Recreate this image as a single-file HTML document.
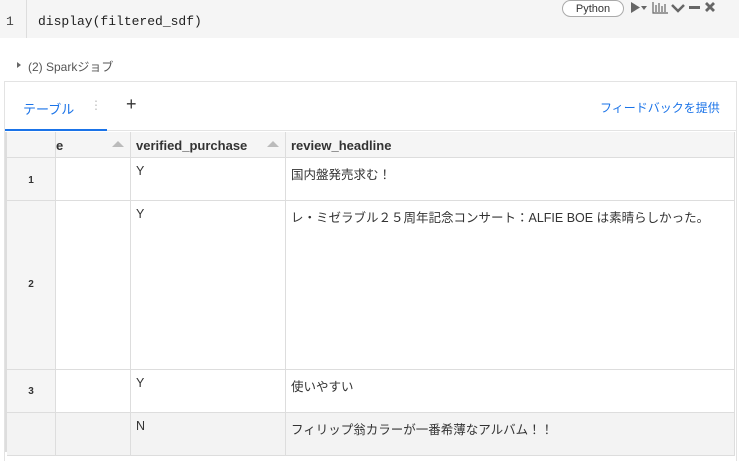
<!DOCTYPE html>
<html><head><meta charset="utf-8"><style>
*{margin:0;padding:0;box-sizing:border-box}
body{width:739px;height:452px;overflow:hidden;background:#fff;font-family:"Liberation Sans","Noto Sans CJK JP",sans-serif;position:relative}
.code{position:absolute;left:0;top:0;width:739px;height:38px;background:#f5f5f5}
.mono{font-family:"Liberation Mono","DejaVu Sans Mono",monospace;font-size:13px;color:#222;position:absolute}
.abs{position:absolute}
.panel{position:absolute;left:4px;top:81px;width:733px;height:380px;border:1px solid #e3e3e3;border-bottom:none}
.cell{position:absolute;border-right:1px solid #ddd;border-bottom:1px solid #ddd;font-size:12.5px;color:#333}
.h{font-size:13px}
</style></head><body>
<div class="code">
<div class="mono" style="left:6px;top:14px;color:#444">1</div>
<div class="abs" style="left:26px;top:0;width:1px;height:38px;background:#ddd"></div>
<div class="mono" style="left:38px;top:14px">display(filtered_sdf)</div>
<div class="abs" style="left:562px;top:0;width:62px;height:17px;border:1px solid #aaa;border-radius:9px;background:#fff;font-size:11px;color:#333;text-align:center;line-height:16px">Python</div>
<svg class="abs" style="left:628px;top:1" width="110" height="14">
<path d="M3 1 L12 6.5 L3 12Z" fill="#666"/><path d="M13 5 L19 5 L16 9Z" fill="#666"/>
<path d="M25 1 V12 H40 M28 4 V11 M31 2 V11 M34 5 V11 M37 3 V11" stroke="#666" stroke-width="1.2" fill="none"/>
<path d="M44 4 L50 10 L56 4" stroke="#666" stroke-width="2.5" fill="none"/>
<rect x="61" y="5" width="11" height="3" fill="#666"/>
<path d="M78 2 L86 10 M86 2 L78 10" stroke="#666" stroke-width="2.8"/>
</svg>
</div>
<div class="abs" style="left:17px;top:62px;width:0;height:0;border-left:4px solid #666;border-top:3.5px solid transparent;border-bottom:3.5px solid transparent"></div>
<div class="abs" style="left:28px;top:58px;font-size:12px;color:#555">(2) Sparkジョブ</div>
<div class="panel"></div>
<div class="abs" style="left:23px;top:99px;font-size:13px;color:#1a73e8">テーブル</div>
<div class="abs" style="left:90px;top:98px;font-size:12px;color:#bbb">⋮</div>
<div class="abs" style="left:126px;top:94px;font-size:18px;color:#333;font-weight:300">+</div>
<div class="abs" style="left:600px;top:99px;font-size:12px;color:#1a73e8">フィードバックを提供</div>
<div class="abs" style="left:5px;top:130px;width:732px;height:1px;background:#e3e3e3"></div>
<div class="abs" style="left:5px;top:129px;width:102px;height:2px;background:#1a73e8"></div>
<div class="abs" style="left:5px;top:132px;width:730px;height:320px;border-left:2px solid #ddd;background:#fff"></div>
<div class="cell" style="left:7px;top:132px;width:49px;height:26px;background:#f5f5f5"></div>
<div class="cell h" style="left:56px;top:132px;width:75px;height:26px;background:#f5f5f5;font-weight:bold;padding:6px 0 0 0">e</div>
<div class="cell h" style="left:131px;top:132px;width:155px;height:26px;background:#f5f5f5;font-weight:bold;padding:6px 0 0 5px">verified_purchase</div>
<div class="cell h" style="left:286px;top:132px;width:449px;height:26px;background:#f5f5f5;font-weight:bold;padding:6px 0 0 5px">review_headline</div>
<div class="abs" style="left:112px;top:141px;border-bottom:6px solid #bbb;border-left:6px solid transparent;border-right:6px solid transparent"></div>
<div class="abs" style="left:267px;top:141px;border-bottom:6px solid #bbb;border-left:6px solid transparent;border-right:6px solid transparent"></div>

<div class="cell" style="left:7px;top:158px;width:49px;height:43px;background:#f5f5f5;font-size:10px;font-weight:bold;text-align:center;padding-top:17px">1</div>
<div class="cell" style="left:56px;top:158px;width:75px;height:43px"></div>
<div class="cell" style="left:131px;top:158px;width:155px;height:43px;padding:6px 0 0 5px">Y</div>
<div class="cell" style="left:286px;top:158px;width:449px;height:43px;padding:6px 0 0 5px">国内盤発売求む！</div>

<div class="cell" style="left:7px;top:201px;width:49px;height:169px;background:#f5f5f5;font-size:10px;font-weight:bold;text-align:center;padding-top:78px">2</div>
<div class="cell" style="left:56px;top:201px;width:75px;height:169px"></div>
<div class="cell" style="left:131px;top:201px;width:155px;height:169px;padding:6px 0 0 5px">Y</div>
<div class="cell" style="left:286px;top:201px;width:449px;height:169px;padding:6px 0 0 5px">レ・ミゼラブル２５周年記念コンサート：ALFIE BOE は素晴らしかった。</div>

<div class="cell" style="left:7px;top:370px;width:49px;height:43px;background:#f5f5f5;font-size:10px;font-weight:bold;text-align:center;padding-top:16px">3</div>
<div class="cell" style="left:56px;top:370px;width:75px;height:43px"></div>
<div class="cell" style="left:131px;top:370px;width:155px;height:43px;padding:6px 0 0 5px">Y</div>
<div class="cell" style="left:286px;top:370px;width:449px;height:43px;padding:6px 0 0 5px">使いやすい</div>

<div class="cell" style="left:7px;top:413px;width:49px;height:43px;background:#f3f3f3"></div>
<div class="cell" style="left:56px;top:413px;width:75px;height:43px;background:#f3f3f3"></div>
<div class="cell" style="left:131px;top:413px;width:155px;height:43px;background:#f3f3f3;padding:6px 0 0 5px">N</div>
<div class="cell" style="left:286px;top:413px;width:449px;height:43px;background:#f3f3f3;padding:6px 0 0 5px">フィリップ翁カラーが一番希薄なアルバム！！</div>
</body></html>
